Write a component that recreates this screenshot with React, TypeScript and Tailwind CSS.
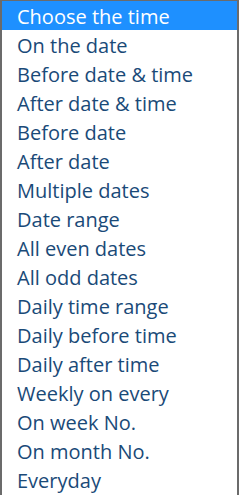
import React from 'react';

const options = [
  'Choose the time',
  'On the date',
  'Before date & time',
  'After date & time',
  'Before date',
  'After date',
  'Multiple dates',
  'Date range',
  'All even dates',
  'All odd dates',
  'Daily time range',
  'Daily before time',
  'Daily after time',
  'Weekly on every',
  'On week No.',
  'On month No.',
  'Everyday',
];

export default function App() {
  return (
    <div className="w-[239px] h-[495px] overflow-hidden bg-white border-t border-x-2 border-[#6b6b6b] font-['Open_Sans',sans-serif]">
      <ul className="flex flex-col">
        {options.map((o, i) => (
          <li
            key={o}
            className={
              'h-[29px] flex items-center pl-[15px] pt-[2px] text-[20px] leading-none whitespace-nowrap ' +
              (i === 0 ? 'bg-[#1e90ff] text-white' : 'text-[#1a4a78]')
            }
          >
            {o}
          </li>
        ))}
      </ul>
    </div>
  );
}
